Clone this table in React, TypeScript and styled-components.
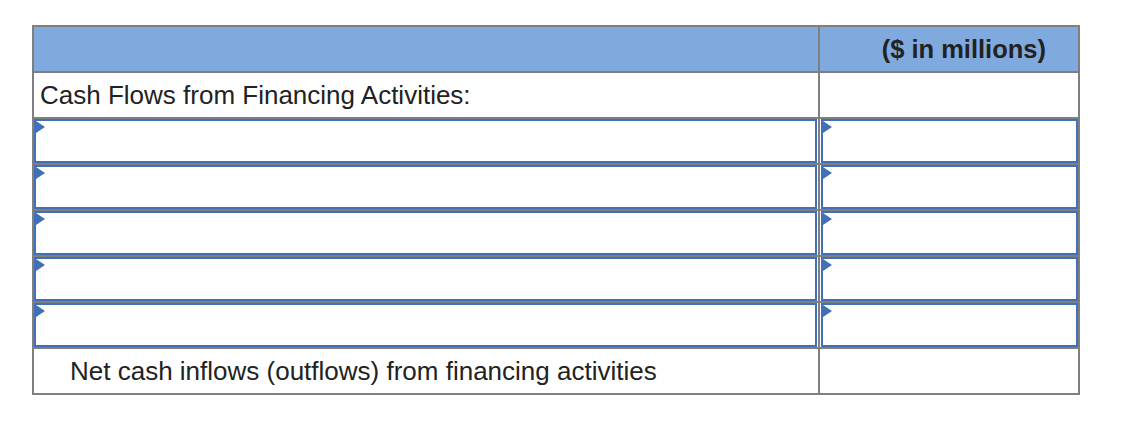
import styled, { createGlobalStyle } from "styled-components";
import React from "react";

const GlobalStyle = createGlobalStyle`
  html, body {
    margin: 0;
    padding: 0;
    background: #ffffff;
  }
  body {
    padding: 25px 0 0 32px;
    font-family: "Liberation Sans", Arial, sans-serif;
    color: #222222;
  }
`;

const Sheet = styled.div`
  display: grid;
  grid-template-columns: 784px 258px;
  grid-auto-rows: 44px;
  gap: 2px;
  padding: 2px;
  width: 1044px;
  background: #7f7f7f;
`;

const HeadCell = styled.div<{ $right?: boolean }>`
  background: #80aade;
  display: flex;
  align-items: center;
  justify-content: ${(p) => (p.$right ? "flex-end" : "flex-start")};
  padding-right: ${(p) => (p.$right ? "32px" : "0")};
  font-size: 25.5px;
  font-weight: bold;
  color: #222222;
`;

const Cell = styled.div<{ $indent?: number }>`
  background: #ffffff;
  display: flex;
  align-items: center;
  padding-left: ${(p) => p.$indent ?? 6}px;
  font-size: 26px;
  color: #222222;
`;

const InputCell = styled.div<{ $side: "left" | "right" }>`
  position: relative;
  background: #ffffff;
  display: flex;
  padding: ${(p) => (p.$side === "left" ? "0 1px 0 0" : "0 0 0 1px")};
`;

const Field = styled.input`
  flex: 1;
  min-width: 0;
  margin: 0;
  padding: 0 8px;
  border: 2px solid #4170b8;
  background: #ffffff;
  font-family: "Liberation Sans", Arial, sans-serif;
  font-size: 24px;
  outline: none;
`;

const Marker = styled.span<{ $side: "left" | "right" }>`
  position: absolute;
  top: 2px;
  left: ${(p) => (p.$side === "left" ? "2px" : "3px")};
  width: 0;
  height: 0;
  border-top: 6px solid transparent;
  border-bottom: 6px solid transparent;
  border-left: 9px solid #4170b8;
  pointer-events: none;
`;

const inputRows = [0, 1, 2, 3, 4];

export default function App() {
  return (
    <>
      <GlobalStyle />
      <Sheet>
        <HeadCell />
        <HeadCell $right>($ in millions)</HeadCell>

        <Cell>Cash Flows from Financing Activities:</Cell>
        <Cell />

        {inputRows.map((i) => (
          <React.Fragment key={i}>
            <InputCell $side="left">
              <Field type="text" />
              <Marker $side="left" />
            </InputCell>
            <InputCell $side="right">
              <Field type="text" />
              <Marker $side="right" />
            </InputCell>
          </React.Fragment>
        ))}

        <Cell $indent={36}>Net cash inflows (outflows) from financing activities</Cell>
        <Cell />
      </Sheet>
    </>
  );
}
